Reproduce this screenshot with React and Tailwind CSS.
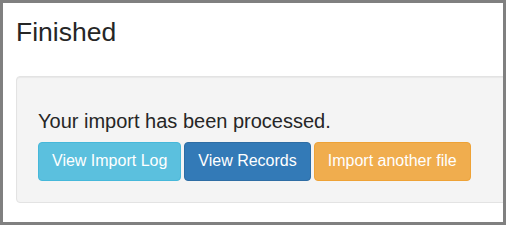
export default function App() {
  return (
    <div className="w-[506px] h-[225px] overflow-hidden border-[3px] border-[#808080] bg-white font-['Liberation_Sans',Arial,sans-serif] text-[#262626]">
      <div className="w-[560px] pl-[13px] pt-[15px]">
        {/* page title */}
        <h3 className="text-[26.5px] leading-[28.6px] font-normal">Finished</h3>

        {/* well with result actions */}
        <div className="mt-[29px] rounded-[4px] border border-[#e3e3e3] bg-[#f4f4f4] pl-[21px] pt-[30px] pb-[21px] shadow-[inset_0_1px_1px_rgba(0,0,0,0.05)]">
          <p className="text-[20px] leading-[28px]">Your import has been processed.</p>
          <div className="mt-[7px] flex gap-[3px] text-[16px] leading-[23px] text-white">
            <button className="rounded-[4px] border border-[#46b8da] bg-[#5bc0de] px-[13px] pt-[6px] pb-[8px]">View Import Log</button>
            <button className="rounded-[4px] border border-[#2e6da4] bg-[#337ab7] px-[13px] pt-[6px] pb-[8px]">View Records</button>
            <button className="rounded-[4px] border border-[#eea236] bg-[#f0ad4e] px-[13px] pt-[6px] pb-[8px]">Import another file</button>
          </div>
        </div>
      </div>
    </div>
  );
}
